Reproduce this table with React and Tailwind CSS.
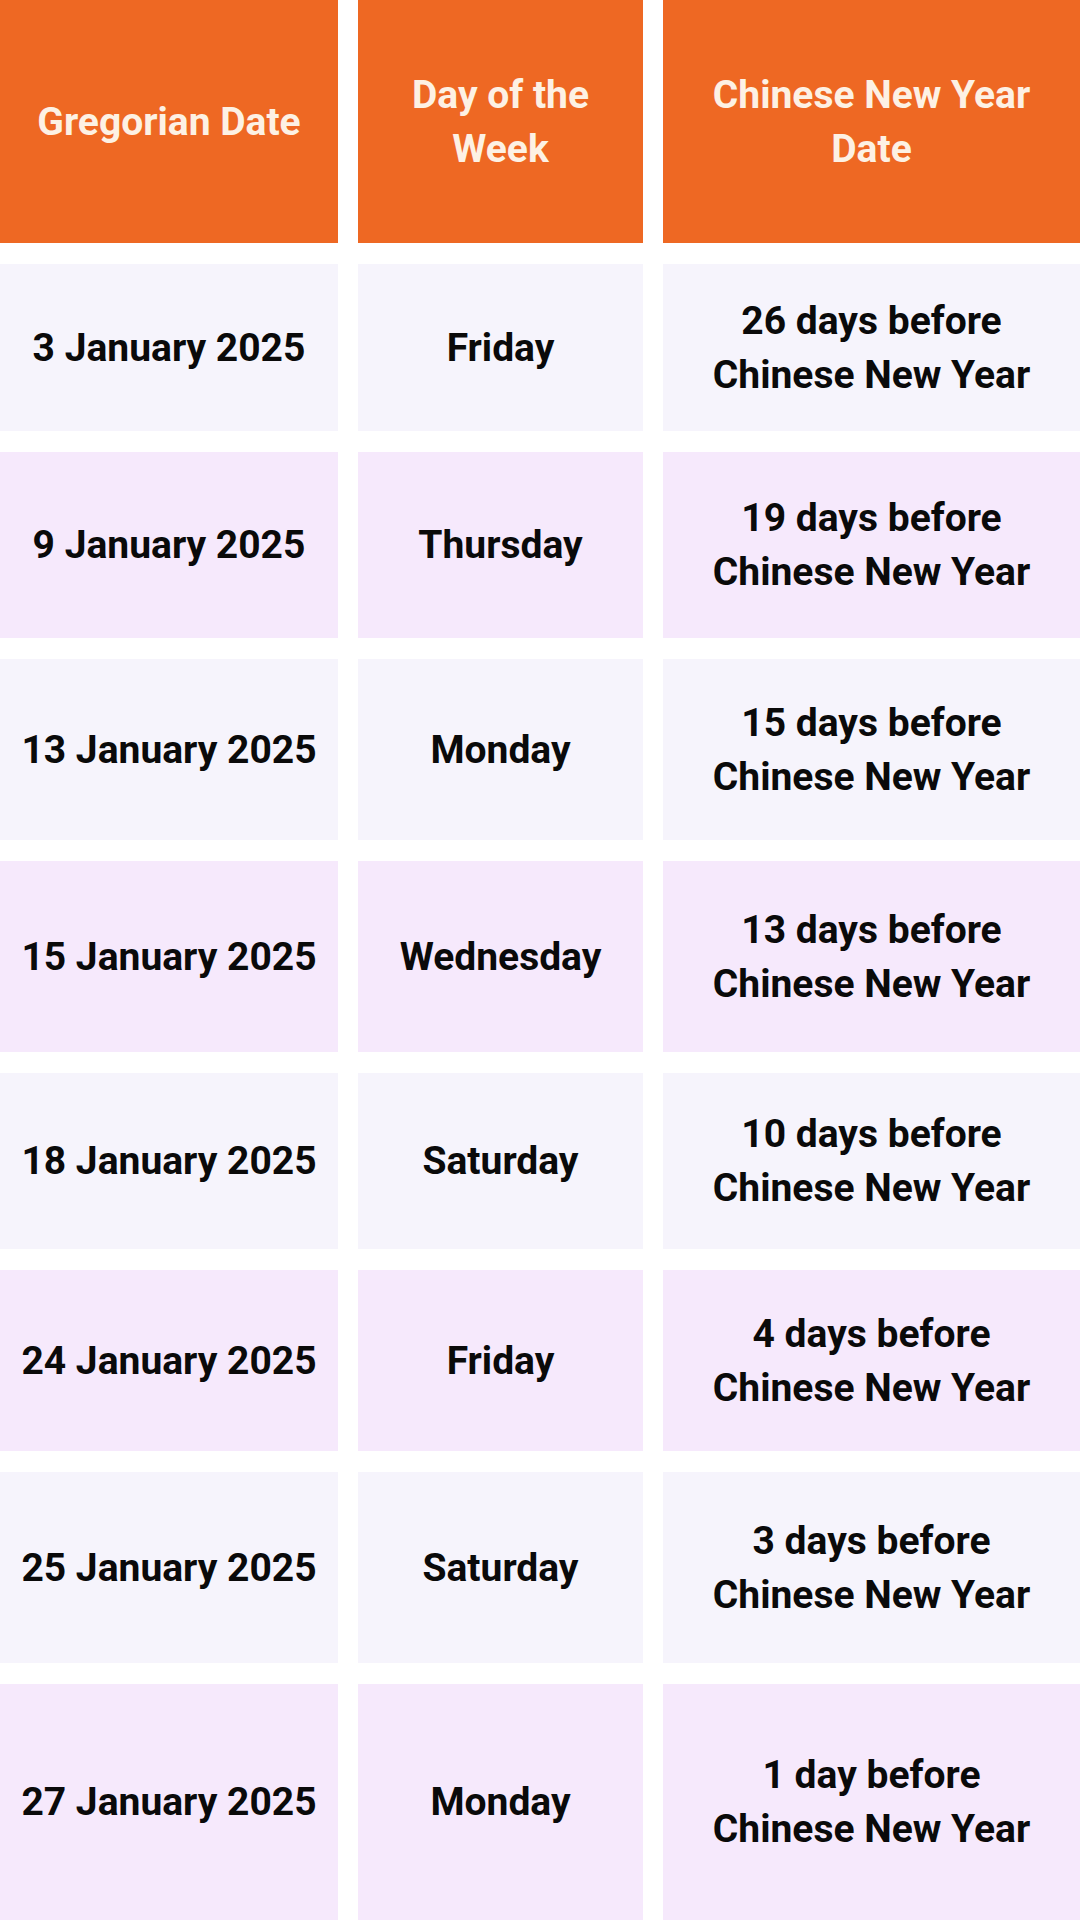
import React from "react";

const rows = [
  ["3 January 2025", "Friday", "26 days before", "h-[167px]", "bg-[#f6f4fc]"],
  ["9 January 2025", "Thursday", "19 days before", "h-[186px]", "bg-[#f6e9fc]"],
  ["13 January 2025", "Monday", "15 days before", "h-[181px]", "bg-[#f6f4fc]"],
  ["15 January 2025", "Wednesday", "13 days before", "h-[191px]", "bg-[#f6e9fc]"],
  ["18 January 2025", "Saturday", "10 days before", "h-[176px]", "bg-[#f6f4fc]"],
  ["24 January 2025", "Friday", "4 days before", "h-[181px]", "bg-[#f6e9fc]"],
  ["25 January 2025", "Saturday", "3 days before", "h-[191px]", "bg-[#f6f4fc]"],
  ["27 January 2025", "Monday", "1 day before", "h-[236px]", "bg-[#f6e9fc]"],
];

export default function App() {
  const head = "h-[243px] bg-[#ee6823] text-[#fdf1e4] flex items-center justify-center text-center text-[39px] leading-[54px] font-bold";
  const cell = "flex items-center justify-center text-center text-[39px] leading-[54px] font-bold text-[#0a0a0a]";
  return (
    <div
      className="w-[1080px] h-[1920px] overflow-hidden bg-white grid grid-cols-[338px_285px_417px] gap-x-5 gap-y-[21px] content-start"
      style={{ fontFamily: "Roboto, 'Noto Sans', sans-serif" }}
    >
      <div className={head}>Gregorian Date</div>
      <div className={head}>Day of the<br />Week</div>
      <div className={head}>Chinese New Year<br />Date</div>
      {rows.map(([d, w, b, h, bg], i) => (
        <React.Fragment key={i}>
          <div className={`${h} ${bg} ${cell}`}>{d}</div>
          <div className={`${h} ${bg} ${cell}`}>{w}</div>
          <div className={`${h} ${bg} ${cell}`}>
            {b}<br />Chinese New Year
          </div>
        </React.Fragment>
      ))}
    </div>
  );
}
